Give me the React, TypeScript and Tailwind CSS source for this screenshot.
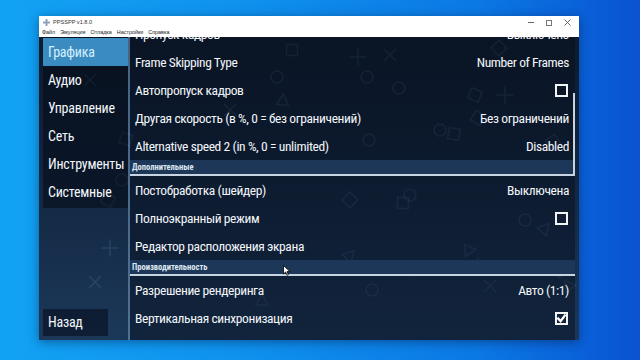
import React from "react";

const ROW = "h-[28px] shrink-0 flex items-center justify-between pl-[5px] pr-[6px] bg-[rgba(6,14,26,0.45)]";
const TXT = "text-[13.5px] tracking-[-0.4px] text-[#f3f6fa] whitespace-nowrap";

function Box({ checked }: { checked?: boolean }) {
  return (
    <svg width="13" height="13" viewBox="0 0 13 13" className="shrink-0 mr-[1px]">
      <rect x="1" y="1" width="11" height="11" fill="none" stroke="#f2f4f6" strokeWidth="2" />
      {checked && <path d="M3.2 6.6 L5.6 9.2 L9.8 3.6" fill="none" stroke="#ffffff" strokeWidth="2.4" strokeLinecap="square" />}
    </svg>
  );
}

function Row({ label, value, box }: { label: string; value?: string; box?: "on" | "off" }) {
  return (
    <div className={ROW}>
      <span className={TXT}>{label}</span>
      {value && <span className={TXT}>{value}</span>}
      {box && <Box checked={box === "on"} />}
    </div>
  );
}

function Header({ label }: { label: string }) {
  return (
    <div className="h-[16px] shrink-0 flex items-center pl-[2px] bg-[#1c3757] border-b-2 border-[#c7d5e2]">
      <span className="text-[8.5px] font-bold text-[#dce7f1] whitespace-nowrap leading-none">{label}</span>
    </div>
  );
}

function Symbols() {
  const s = "rgba(130,170,210,0.16)";
  const crosses = [[358, 57], [390, 55], [505, 95], [90, 80], [110, 248], [95, 282], [478, 266], [490, 286], [590, 160], [230, 110], [447, 20]];
  const circles = [[367, 77], [399, 88], [277, 77], [122, 180], [440, 130], [369, 140], [410, 195], [410, 270], [372, 290], [525, 220]];
  const squares = [[292, 50], [475, 95], [499, 48], [454, 134], [478, 118], [553, 142], [126, 139], [350, 200], [403, 203], [108, 200], [560, 270]];
  const tris = [[520, 350], [545, 228], [570, 286], [262, 300], [350, 255], [470, 250], [283, 100], [25, 305]];
  return (
    <svg className="absolute inset-0 pointer-events-none" width="540" height="303" viewBox="39 37 540 303">
      <g fill="none" stroke={s} strokeWidth="1.6">
        {crosses.map(([x, y], i) => (
          <path key={"c" + i} d={`M${x - 6} ${y - 6} L${x + 6} ${y + 6} M${x + 6} ${y - 6} L${x - 6} ${y + 6}`} transform={`rotate(${i % 2 ? 0 : 45} ${x} ${y})`} />
        ))}
        {circles.map(([x, y], i) => (
          <circle key={"o" + i} cx={x} cy={y} r="6" />
        ))}
        {squares.map(([x, y], i) => (
          <rect key={"s" + i} x={x - 5.5} y={y - 5.5} width="11" height="11" transform={`rotate(${(i * 23) % 60} ${x} ${y})`} />
        ))}
        {tris.map(([x, y], i) => (
          <path key={"t" + i} d={`M${x} ${y - 6} L${x + 6} ${y + 5} L${x - 6} ${y + 5} Z`} transform={`rotate(${(i * 41) % 120} ${x} ${y})`} />
        ))}
      </g>
    </svg>
  );
}

export default function App() {
  const sidebar = ["Графика", "Аудио", "Управление", "Сеть", "Инструменты", "Системные"];
  return (
    <div className="w-[640px] h-[360px] overflow-hidden pl-[39px] pt-[16px] bg-[linear-gradient(90deg,#12a2f3_0%,#0f93ee_35%,#0b78e4_75%,#0a5fd8_92%,#0a52d0_100%)]">
      <div className="w-[540px] h-[324px] flex flex-col shadow-[0_2px_10px_rgba(0,20,60,0.45)] font-['Roboto_Condensed','Liberation_Sans_Narrow','DejaVu_Sans_Condensed',Roboto,sans-serif]">
        {/* title bar */}
        <div className="h-[21px] shrink-0 bg-white flex flex-col font-['Liberation_Sans',Arial,sans-serif]">
          <div className="h-[13px] flex items-center pl-[4px] pr-[8px]">
            <svg width="7" height="7" viewBox="0 0 7 7" className="mr-[3px]">
              <path d="M2.5 0h2v2.5H7v2H4.5V7h-2V4.5H0v-2h2.5z" fill="#8fa3b8" />
            </svg>
            <span className="text-[5.6px] text-[#333] leading-none">PPSSPP v1.8.0</span>
            <div className="ml-auto flex items-center gap-[12px]">
              <span className="block w-[6px] h-[1px] bg-[#666]" />
              <span className="block w-[6px] h-[6px] border border-[#777]" />
              <svg width="7" height="7" viewBox="0 0 7 7"><path d="M0.5 0.5 L6.5 6.5 M6.5 0.5 L0.5 6.5" stroke="#555" strokeWidth="0.9" /></svg>
            </div>
          </div>
          <div className="h-[8px] flex items-center pl-[3px] gap-[5px] text-[5.4px] text-[#222] leading-none whitespace-nowrap">
            <span>Файл</span>
            <span>Эмуляция</span>
            <span>Отладка</span>
            <span>Настройки</span>
            <span>Справка</span>
          </div>
        </div>
        {/* content */}
        <div className="flex-1 min-h-0 flex relative overflow-hidden bg-[linear-gradient(180deg,#0d1b2d_0%,#122640_45%,#1c3859_100%)]">
          <Symbols />
          {/* sidebar */}
          <div className="relative w-[89px] shrink-0 flex flex-col pl-[4px] pb-[4px]">
            <div className="flex flex-col pt-[1px] bg-[rgba(4,10,20,0.55)] pb-[2px]">
              {sidebar.map((t, i) => (
                <div key={t} className={`h-[28px] flex items-center pl-[5px] text-[14px] tracking-[-0.25px] whitespace-nowrap ${i === 0 ? "bg-[#3a8bc0] text-[#d4efff]" : "text-[#f3f6fa]"}`}>
                  {t}
                </div>
              ))}
            </div>
            <div className="flex-1" />
            <div className="w-[65px] h-[27px] flex items-center pl-[5px] bg-[rgba(6,14,28,0.6)] text-[14px] tracking-[-0.25px] text-[#f3f6fa]">Назад</div>
          </div>
          <div className="w-[2px] shrink-0 bg-[rgba(120,160,200,0.55)]" />
          {/* settings list */}
          <div className="relative flex-1 min-w-0 pr-[4px]">
            <div className="flex flex-col -mt-[17px]">
              <Row label="Пропуск кадров" value="Выключено" />
              <Row label="Frame Skipping Type" value="Number of Frames" />
              <Row label="Автопропуск кадров" box="off" />
              <Row label="Другая скорость (в %, 0 = без ограничений)" value="Без ограничений" />
              <Row label="Alternative speed 2 (in %, 0 = unlimited)" value="Disabled" />
              <Header label="Дополнительные" />
              <Row label="Постобработка (шейдер)" value="Выключена" />
              <Row label="Полноэкранный режим" box="off" />
              <Row label="Редактор расположения экрана" />
              <Header label="Производительность" />
              <Row label="Разрешение рендеринга" value="Авто (1:1)" />
              <Row label="Вертикальная синхронизация" box="on" />
              <Row label="" box="off" />
            </div>
            <div className="absolute right-[4px] top-[56px] w-[2px] h-[82px] bg-[#c9d3dc]" />
          </div>
          {/* cursor */}
          <svg className="absolute left-[244px] top-[228px]" width="8" height="11" viewBox="0 0 8 11">
            <path d="M0.5 0.5 L0.5 9 L2.6 7 L4 10.3 L5.4 9.7 L4 6.6 L7 6.6 Z" fill="#fff" stroke="#000" strokeWidth="0.8" />
          </svg>
        </div>
      </div>
    </div>
  );
}
